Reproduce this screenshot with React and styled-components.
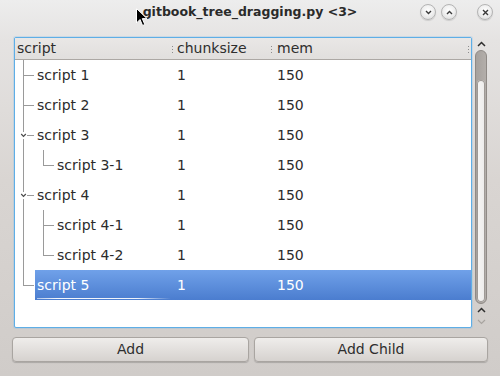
import React from 'react';
import styled, { createGlobalStyle } from 'styled-components';

const Global = createGlobalStyle`
  html, body { margin: 0; padding: 0; width: 500px; height: 376px; overflow: hidden; }
  body { font-family: "DejaVu Sans", "Liberation Sans", sans-serif; }
`;

const Window = styled.div`
  position: relative;
  width: 500px;
  height: 376px;
  display: flex;
  flex-direction: column;
  background: linear-gradient(to bottom, #ededed 0px, #e5e3e2 40px, #d9d5d2 180px, #d0ccc9 376px);
`;

const TitleBar = styled.div`
  height: 37px;
  flex: none;
  display: grid;
  grid-template-columns: 1fr auto 1fr;
  align-items: start;
`;

const Title = styled.div`
  grid-column: 2;
  font-weight: bold;
  font-size: 12.5px;
  line-height: 15px;
  color: #2a2a2a;
  padding-top: 4px;
  white-space: nowrap;
`;

const WinButtons = styled.div`
  grid-column: 3;
  justify-self: end;
  display: flex;
  padding: 4px 7px 0 0;
`;

const WinButton = styled.div`
  width: 16px;
  height: 16px;
  box-sizing: border-box;
  border-radius: 50%;
  border: 1px solid #b4b4b4;
  background: radial-gradient(circle at 50% 40%, #ffffff 0%, #f1f1f1 45%, #d6d6d6 100%);
  box-shadow: 0 1px 1px rgba(0, 0, 0, 0.12);
  display: flex;
  align-items: center;
  justify-content: center;
  margin-left: ${p => p.$gap}px;
`;

const Content = styled.div`
  flex: 1;
  display: flex;
  flex-direction: column;
  padding: 0 12px;
`;

const TreeArea = styled.div`
  display: flex;
  height: 291px;
  margin-left: 2px;
  gap: 2px;
`;

const TreeFrame = styled.div`
  flex: 1;
  display: flex;
  flex-direction: column;
  border: 1px solid #5eaee6;
  border-radius: 2px;
  background: #ffffff;
  box-shadow: 0 0 0 1px rgba(120, 185, 235, 0.25);
  overflow: hidden;
`;

const Header = styled.div`
  height: 21px;
  flex: none;
  display: flex;
  border-bottom: 1px solid #aca8a4;
  background: linear-gradient(to bottom, #e9e7e6, #e1dfdd);
`;

const HeaderCell = styled.div`
  position: relative;
  box-sizing: border-box;
  width: ${p => (p.$w ? `${p.$w}px` : 'auto')};
  flex: ${p => (p.$w ? 'none' : '1')};
  padding-left: ${p => p.$pad}px;
  font-size: 14px;
  line-height: 21px;
  color: #2e2e2e;
  &::after {
    content: "";
    position: absolute;
    right: ${p => p.$dotRight}px;
    top: 8px;
    width: 1px;
    height: 7px;
    background: repeating-linear-gradient(to bottom, #8c8c8c 0 1px, transparent 1px 3px);
  }
`;

const Rows = styled.div`
  display: flex;
  flex-direction: column;
`;

const Row = styled.div`
  display: flex;
  height: 30px;
`;

const BranchBox = styled.div`
  width: 20px;
  height: 30px;
  flex: none;
  svg { display: block; }
`;

const RowBody = styled.div`
  flex: 1;
  display: flex;
  color: ${p => (p.$selected ? '#ffffff' : '#2b2b2b')};
  background: ${p => (p.$selected ? 'linear-gradient(to bottom, #70a1e9, #4b7dcf)' : 'transparent')};
`;

const Cell = styled.div`
  position: relative;
  box-sizing: border-box;
  width: ${p => (p.$w ? `${p.$w}px` : 'auto')};
  flex: ${p => (p.$w ? 'none' : '1')};
  padding-left: ${p => p.$pad}px;
  font-size: 14px;
  line-height: 30px;
  white-space: nowrap;
`;

const FocusLine = styled.span`
  position: absolute;
  left: 2px;
  bottom: 1px;
  width: 134px;
  height: 1px;
  background: linear-gradient(to right, rgba(255,255,255,0.55), rgba(255,255,255,0.95) 15%, rgba(255,255,255,0.9) 75%, rgba(255,255,255,0));
`;

const ScrollBar = styled.div`
  width: 14px;
  flex: none;
  display: flex;
  flex-direction: column;
`;

const ScrollArrow = styled.div`
  height: ${p => p.$h}px;
  flex: none;
  display: flex;
  align-items: center;
  justify-content: center;
  svg { display: block; }
`;

const Groove = styled.div`
  flex: 1;
  margin: 0 1px;
  box-sizing: border-box;
  border: 1px solid #8f8a86;
  border-radius: 6px;
  background: linear-gradient(to right, #a6a19d, #b3aeaa);
  padding: 1px;
  display: flex;
  flex-direction: column;
`;

const Handle = styled.div`
  flex: 1;
  margin-top: 28px;
  border-radius: 5px;
  background: linear-gradient(to right, #f7f6f5, #ecebea);
  box-shadow: inset 0 0 0 1px #9e9995;
`;

const ButtonRow = styled.div`
  display: grid;
  grid-template-columns: 237px 1fr;
  gap: 5px;
  margin-top: 9px;
`;

const PushButton = styled.div`
  height: 25px;
  box-sizing: border-box;
  border: 1px solid #a9a5a1;
  border-radius: 4px;
  background: linear-gradient(to bottom, #efedeb, #d6d2cf);
  box-shadow: 0 1px 1px rgba(0, 0, 0, 0.18);
  display: flex;
  align-items: center;
  justify-content: center;
  padding-bottom: 2px;
  font-size: 14px;
  color: #2e2e2e;
`;

const Cursor = styled.svg`
  position: absolute;
  left: 136px;
  top: 8px;
`;

const LINE = '#9a9a9a';

function Branch({ kind }) {
  let d = '';
  if (kind === 'tee') d = 'M8.5 0V30M9 15.5H19';
  if (kind === 'corner') d = 'M8.5 0V16M9 15.5H19';
  if (kind === 'pipe') d = 'M8.5 0V30';
  if (kind === 'expand') d = 'M8.5 0V12M8.5 19V30M12 15.5H19';
  return (
    <BranchBox>
      <svg width="20" height="30" viewBox="0 0 20 30">
        {d && <path d={d} stroke={LINE} strokeWidth="1" fill="none" />}
        {kind === 'expand' && (
          <path d="M6.2 14 L8.5 16.3 L10.8 14" stroke="#4a4a4a" strokeWidth="1.2" fill="none" />
        )}
      </svg>
    </BranchBox>
  );
}

const rows = [
  { name: 'script 1', deco: ['tee'] },
  { name: 'script 2', deco: ['tee'] },
  { name: 'script 3', deco: ['expand'] },
  { name: 'script 3-1', deco: ['pipe', 'corner'] },
  { name: 'script 4', deco: ['expand'] },
  { name: 'script 4-1', deco: ['pipe', 'tee'] },
  { name: 'script 4-2', deco: ['pipe', 'corner'] },
  { name: 'script 5', deco: ['corner'], selected: true },
];

function Chevron({ up, color = '#2e2e2e', w = 9, h = 6, sw = 1.5 }) {
  return (
    <svg width={w} height={h} viewBox="0 0 9 6">
      <path d={up ? 'M1 5 L4.5 1.5 L8 5' : 'M1 1 L4.5 4.5 L8 1'} stroke={color} strokeWidth={sw} fill="none" />
    </svg>
  );
}

export default function App() {
  return (
    <>
      <Global />
      <Window>
        <TitleBar>
          <Title>gitbook_tree_dragging.py &lt;3&gt;</Title>
          <WinButtons>
            <WinButton $gap={0}>
              <svg width="7" height="5" viewBox="0 0 7 5">
                <path d="M1 1 L3.5 3.5 L6 1" stroke="#3a3a3a" strokeWidth="1.4" fill="none" />
              </svg>
            </WinButton>
            <WinButton $gap={5}>
              <svg width="7" height="5" viewBox="0 0 7 5">
                <path d="M1 4 L3.5 1.5 L6 4" stroke="#3a3a3a" strokeWidth="1.4" fill="none" />
              </svg>
            </WinButton>
            <WinButton $gap={20}>
              <svg width="7" height="7" viewBox="0 0 7 7">
                <path d="M1 1 L6 6 M6 1 L1 6" stroke="#3a3a3a" strokeWidth="1.4" fill="none" />
              </svg>
            </WinButton>
          </WinButtons>
        </TitleBar>

        <Content>
          <TreeArea>
            <TreeFrame>
              <Header>
                <HeaderCell $w={158} $pad={2} $dotRight={0}>script</HeaderCell>
                <HeaderCell $w={99} $pad={4} $dotRight={0}>chunksize</HeaderCell>
                <HeaderCell $pad={5} $dotRight={2}>mem</HeaderCell>
              </Header>
              <Rows>
                {rows.map(r => (
                  <Row key={r.name}>
                    {r.deco.map((k, i) => (
                      <Branch key={i} kind={k} />
                    ))}
                    <RowBody $selected={r.selected}>
                      <Cell $w={158 - 20 * r.deco.length} $pad={2}>
                        {r.name}
                        {r.selected && <FocusLine />}
                      </Cell>
                      <Cell $w={99} $pad={4}>1</Cell>
                      <Cell $pad={5}>150</Cell>
                    </RowBody>
                  </Row>
                ))}
              </Rows>
            </TreeFrame>
            <ScrollBar>
              <ScrollArrow $h={13}>
                <Chevron up />
              </ScrollArrow>
              <Groove>
                <Handle />
              </Groove>
              <ScrollArrow $h={12}>
                <Chevron up />
              </ScrollArrow>
              <ScrollArrow $h={12}>
                <Chevron color="#a8a4a0" sw={1.2} />
              </ScrollArrow>
            </ScrollBar>
          </TreeArea>
          <ButtonRow>
            <PushButton>Add</PushButton>
            <PushButton>Add Child</PushButton>
          </ButtonRow>
        </Content>

        <Cursor width="12" height="19" viewBox="0 0 12 19">
          <path d="M0.5 0.5 L0.5 15 L4 11.5 L6.6 17.5 L8.8 16.5 L6.3 10.6 L11 10.6 Z" fill="#000" stroke="#fff" strokeWidth="1" strokeLinejoin="round" />
        </Cursor>
      </Window>
    </>
  );
}
